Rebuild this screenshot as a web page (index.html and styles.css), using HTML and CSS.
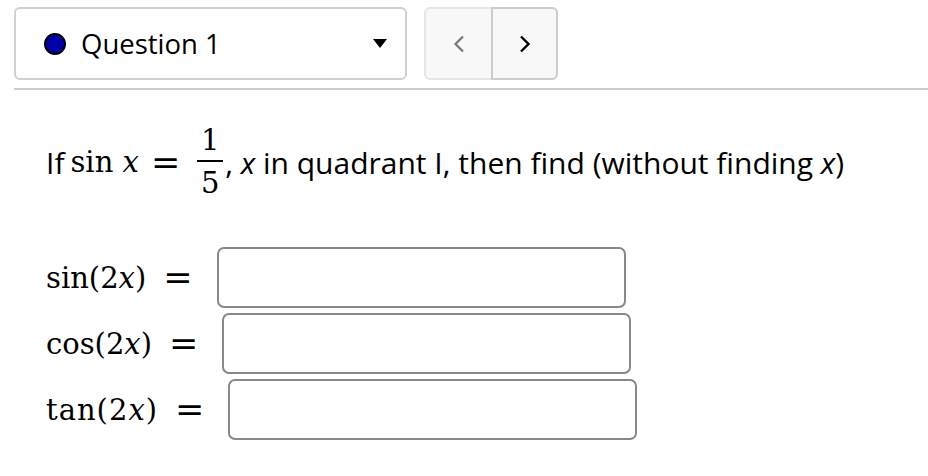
FILE: index.html
```html
<!DOCTYPE html>
<html>
<head>
<meta charset="utf-8">
<link rel="stylesheet" href="styles.css">
</head>
<body>
<div class="header">
  <div class="select">
    <span class="dot"></span>
    <span class="qlabel">Question 1</span>
    <span class="caret"></span>
  </div>
  <div class="nav">
    <button class="navbtn prev" aria-label="previous">
      <svg width="12" height="18" viewBox="0 0 12 18"><polyline points="10,1.5 2.5,9 10,16.5" fill="none" stroke="#777" stroke-width="2.2"/></svg>
    </button>
    <button class="navbtn next" aria-label="next">
      <svg width="12" height="18" viewBox="0 0 12 18"><polyline points="2,1.5 9.5,9 2,16.5" fill="none" stroke="#000" stroke-width="2.4"/></svg>
    </button>
  </div>
</div>
<div class="rule"></div>
<div class="content">
  <p class="question">
    <span class="txt">If</span>
    <span class="math m-sin">sin <i>x</i></span>
    <span class="math m-eq">=</span>
    <span class="frac"><span class="num">1</span><span class="bar"></span><span class="den">5</span></span><span class="txt rest">, <i class="ix">x</i> in quadrant I, then find (without finding <i class="ix">x</i>)</span>
  </p>
  <div class="rows">
    <div class="row">
      <span class="math lbl">sin(2<i>x</i>)</span>
      <span class="math eq">=</span>
      <span class="box"></span>
    </div>
    <div class="row">
      <span class="math lbl">cos(2<i>x</i>)</span>
      <span class="math eq">=</span>
      <span class="box"></span>
    </div>
    <div class="row">
      <span class="math lbl lbl-wide">tan(2<i>x</i>)</span>
      <span class="math eq">=</span>
      <span class="box"></span>
    </div>
  </div>
</div>
</body>
</html>
```
FILE: styles.css
```css
html, body {
  margin: 0;
  padding: 0;
  background: #fff;
}
body {
  font-family: "Open Sans", "Liberation Sans", sans-serif;
  color: #000;
}
.header {
  display: flex;
  align-items: flex-start;
  padding: 7px 0 0 14px;
  gap: 17px;
}
.select {
  box-sizing: border-box;
  width: 393px;
  height: 73px;
  border: 2px solid #d0d0d0;
  border-radius: 6px;
  display: flex;
  align-items: center;
  padding-left: 28px;
  padding-right: 18px;
}
.dot {
  box-sizing: border-box;
  width: 22px;
  height: 22px;
  border-radius: 50%;
  background: #0000a8;
  border: 2px solid #000;
  flex: none;
}
.qlabel {
  font-size: 27.5px;
  margin-left: 15px;
  flex: 1;
  line-height: 1;
}
.caret {
  width: 0;
  height: 0;
  border-left: 7.5px solid transparent;
  border-right: 7.5px solid transparent;
  border-top: 9px solid #000;
}
.nav {
  display: flex;
  width: 135px;
  height: 73px;
}
.navbtn {
  box-sizing: border-box;
  width: 67px;
  height: 73px;
  margin: 0;
  padding: 0;
  background: #f8f8f8;
  display: flex;
  align-items: center;
  justify-content: center;
}
.prev {
  border: 2px solid #e6e6e6;
  border-right: none;
  border-radius: 6px 0 0 6px;
}
.next {
  border: 2px solid #cccccc;
  border-radius: 0 6px 6px 0;
}
.rule {
  margin: 8px 0 0 14px;
  height: 2px;
  background: #cccccc;
}
.content {
  padding-left: 46px;
}
.question {
  margin: 34px 0 0 0;
  display: flex;
  align-items: center;
  font-size: 30px;
  height: 76px;
}
.txt {
  white-space: pre;
}
.rest i.ix {
  font-style: italic;
}
.math {
  font-family: "DejaVu Serif", "Liberation Serif", serif;
  font-size: 29px;
}
.math i {
  font-style: italic;
}
.m-sin {
  margin-left: 6px;
}
.m-eq {
  font-size: 35px;
  line-height: 1;
  margin-left: 12px;
  margin-right: 17px;
}
.frac {
  display: inline-flex;
  flex-direction: column;
  align-items: center;
  font-family: "DejaVu Serif", "Liberation Serif", serif;
  font-size: 29px;
  line-height: 1;
  width: 26px;
}
.frac .num {
  display: block;
  margin-bottom: 5px;
}
.frac .bar {
  display: block;
  width: 26px;
  height: 2px;
  background: #000;
}
.frac .den {
  display: block;
  margin-top: 7px;
}
.rest {
  margin-left: 2px;
}
.rows {
  margin-top: 47px;
  display: flex;
  flex-direction: column;
  gap: 5px;
}
.row {
  display: flex;
  align-items: center;
  height: 61px;
}
.lbl {
  white-space: nowrap;
}
.lbl-wide {
  letter-spacing: 1px;
}
.eq {
  font-size: 35px;
  line-height: 1;
  margin-left: 17px;
  margin-right: 24px;
}
.box {
  box-sizing: border-box;
  width: 409px;
  height: 61px;
  border: 2px solid #888;
  border-radius: 7px;
  background: #fff;
}
```
